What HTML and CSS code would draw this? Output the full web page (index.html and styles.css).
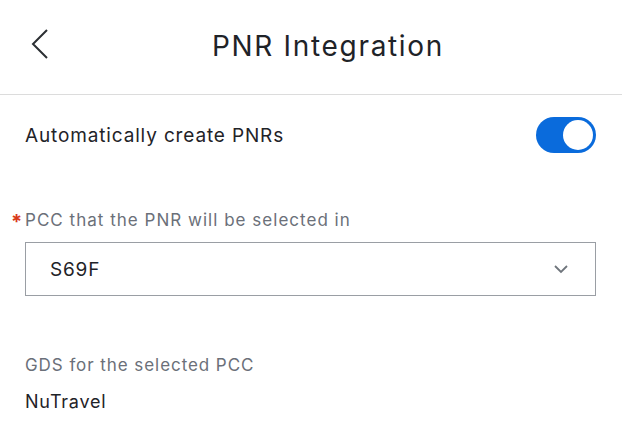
FILE: index.html
```html
<!DOCTYPE html>
<html lang="en">
<head>
    <meta charset="UTF-8">
    <meta name="viewport" content="width=device-width, initial-scale=1.0">
    <title>PNR Integration</title>
    <link rel="stylesheet" href="styles.css">
</head>
<body>
    <header class="top-bar">
        <button type="button" class="back-button" aria-label="Back">
            <svg width="20" height="32" viewBox="0 0 20 32">
                <path d="M16 2 L2 16 L16 30" fill="none" stroke="#2b2f33" stroke-width="2"/>
            </svg>
        </button>
        <h1>PNR Integration</h1>
    </header>

    <main class="content">
        <div class="toggle-row">
            <span class="toggle-label">Automatically create PNRs</span>
            <label class="switch">
                <input type="checkbox" checked>
                <span class="slider"></span>
            </label>
        </div>

        <div class="field">
            <label for="pcc" class="field-label"><span class="required">*</span>PCC that the PNR will be selected in</label>
            <div class="select-box">
                <span class="select-value">S69F</span>
                <svg width="16" height="10" viewBox="0 0 16 10">
                    <path d="M2 2 L8 8 L14 2" fill="none" stroke="#6f757c" stroke-width="1.8"/>
                </svg>
            </div>
        </div>

        <div class="info">
            <div class="info-label">GDS for the selected PCC</div>
            <div class="info-value">NuTravel</div>
        </div>
    </main>
</body>
</html>
```

FILE: styles.css
```css
body {
    font-family: Inter, Roboto, sans-serif;
    letter-spacing: 0.05em;
    background-color: #ffffff;
    color: #1f2328;
    margin: 0;
    padding: 0;
}

.top-bar {
    position: relative;
    height: 94px;
    border-bottom: 1px solid #dcdcdc;
    display: flex;
    align-items: center;
    justify-content: center;
    padding-left: 34px;
}

.top-bar h1 {
    margin: 0;
    font-size: 28px;
    font-weight: 400;
    letter-spacing: 0.06em;
    color: #1f2328;
    padding-bottom: 2px;
}

.back-button {
    position: absolute;
    left: 31px;
    top: 28px;
    background: none;
    border: none;
    padding: 0;
    width: 20px;
    height: 32px;
}

.content {
    padding: 0 26px 0 25px;
}

.toggle-row {
    display: flex;
    justify-content: space-between;
    align-items: center;
    height: 36px;
    margin-top: 22px;
}

.toggle-label {
    font-size: 19px;
    letter-spacing: 0.045em;
}

.switch {
    position: relative;
    display: block;
    width: 60px;
    height: 36px;
}

.switch input {
    display: none;
}

.slider {
    position: absolute;
    inset: 0;
    background-color: #0a6bdc;
    border-radius: 18px;
}

.slider::after {
    content: "";
    position: absolute;
    top: 3px;
    right: 3px;
    width: 30px;
    height: 30px;
    border-radius: 50%;
    background-color: #ffffff;
}

.field {
    margin-top: 56px;
}

.field-label {
    display: block;
    position: relative;
    font-size: 17px;
    letter-spacing: 0.06em;
    color: #6b7079;
    line-height: 22px;
    margin-bottom: 11px;
}

.required {
    position: absolute;
    left: -14px;
    top: 2px;
    color: #d93a1a;
    font-size: 20px;
    font-weight: 700;
}

.select-box {
    display: flex;
    justify-content: space-between;
    align-items: center;
    height: 52px;
    border: 1px solid #9a9ea4;
    padding: 0 26px 0 24px;
}

.select-value {
    font-size: 19px;
    color: #1f2328;
}

.info {
    margin-top: 58px;
}

.info-label {
    font-size: 17px;
    letter-spacing: 0.055em;
    color: #6b7079;
    line-height: 22px;
}

.info-value {
    font-size: 18px;
    margin-top: 15px;
    line-height: 22px;
}
```
